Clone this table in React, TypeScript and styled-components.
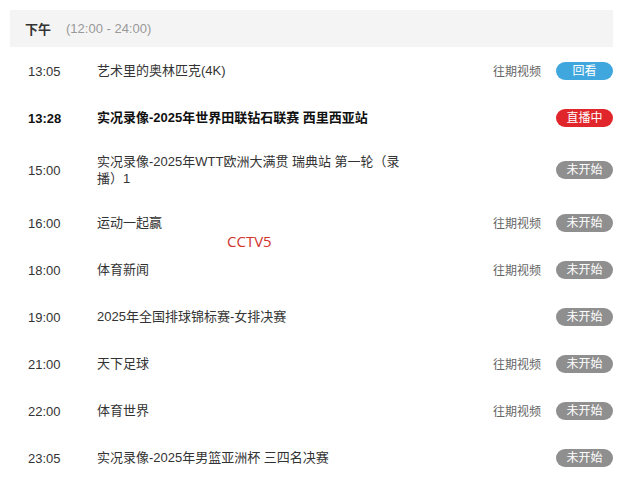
import React from "react";
import styled, { createGlobalStyle } from "styled-components";

const Global = createGlobalStyle`
  html, body { margin: 0; padding: 0; background: #fff; }
  body { font-family: "Liberation Sans", "Noto Sans CJK SC", Arial, sans-serif; }
`;

const Page = styled.div`
  position: relative;
  width: 603px;
  padding: 10px 27px 0 10px;
`;

const Header = styled.div`
  display: flex;
  align-items: center;
  height: 36px;
  padding-left: 15px;
  background: #f4f4f4;
  box-shadow: 0 1px 1px rgba(0, 0, 0, 0.04);
  font-size: 13px;
`;

const Period = styled.span`
  font-weight: bold;
  color: #333;
  width: 41px;
`;

const Range = styled.span`
  color: #999;
  font-size: 13px;
`;

const List = styled.div`
  display: flex;
  flex-direction: column;
  padding-top: 1px;
`;

const Row = styled.div<{ $live?: boolean }>`
  display: flex;
  align-items: center;
  min-height: 23px;
  padding: 12px 0 12px 18px;
  font-size: 13px;
  color: ${(p) => (p.$live ? "#111" : "#333")};
  font-weight: ${(p) => (p.$live ? "bold" : "normal")};
`;

const Time = styled.div`
  width: 69px;
  flex: none;
  line-height: 17px;
  padding-top: 1px;
`;

const Title = styled.div`
  width: 318px;
  flex: none;
  line-height: 17px;
`;

const Actions = styled.div`
  flex: 1;
  display: flex;
  justify-content: flex-end;
  align-items: center;
  gap: 15px;
`;

const Past = styled.span`
  font-size: 12px;
  color: #666;
  font-weight: normal;
`;

const badgeColors = {
  replay: "#3fa7de",
  live: "#e0262a",
  pending: "#8f8f8f",
};

const Badge = styled.span<{ $kind: keyof typeof badgeColors }>`
  width: 57px;
  height: 18px;
  line-height: 18px;
  border-radius: 9px;
  text-align: center;
  font-size: 12px;
  font-weight: normal;
  color: #fff;
  background: ${(p) => badgeColors[p.$kind]};
`;

const Watermark = styled.div`
  position: absolute;
  left: 227px;
  top: 232px;
  font-size: 15px;
  line-height: 18px;
  color: #d2332c;
  font-family: "Open Sans", "Liberation Sans", sans-serif;
`;

type Item = {
  time: string;
  title: string;
  past?: boolean;
  kind: keyof typeof badgeColors;
};

const items: Item[] = [
  { time: "13:05", title: "艺术里的奥林匹克(4K)", past: true, kind: "replay" },
  { time: "13:28", title: "实况录像-2025年世界田联钻石联赛 西里西亚站", kind: "live" },
  { time: "15:00", title: "实况录像-2025年WTT欧洲大满贯 瑞典站 第一轮（录播）1", kind: "pending" },
  { time: "16:00", title: "运动一起赢", past: true, kind: "pending" },
  { time: "18:00", title: "体育新闻", past: true, kind: "pending" },
  { time: "19:00", title: "2025年全国排球锦标赛-女排决赛", kind: "pending" },
  { time: "21:00", title: "天下足球", past: true, kind: "pending" },
  { time: "22:00", title: "体育世界", past: true, kind: "pending" },
  { time: "23:05", title: "实况录像-2025年男篮亚洲杯 三四名决赛", kind: "pending" },
];

const labels = { replay: "回看", live: "直播中", pending: "未开始" };

export default function App() {
  return (
    <>
      <Global />
      <Page>
        <Header>
          <Period>下午</Period>
          <Range>(12:00 - 24:00)</Range>
        </Header>
        <List>
          {items.map((it) => (
            <Row key={it.time} $live={it.kind === "live"}>
              <Time>{it.time}</Time>
              <Title>{it.title}</Title>
              <Actions>
                {it.past && <Past>往期视频</Past>}
                <Badge $kind={it.kind}>{labels[it.kind]}</Badge>
              </Actions>
            </Row>
          ))}
        </List>
        <Watermark>CCTV5</Watermark>
      </Page>
    </>
  );
}
